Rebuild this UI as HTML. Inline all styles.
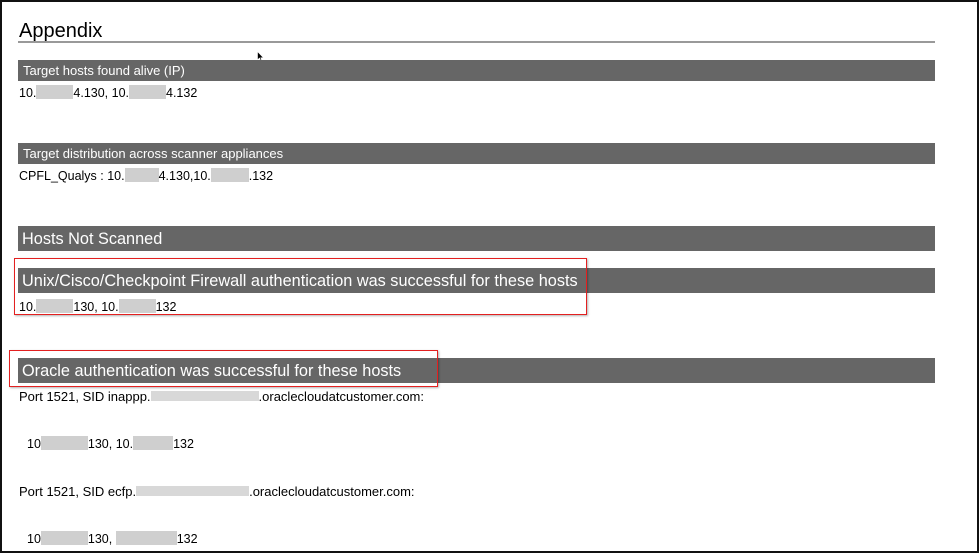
<!DOCTYPE html>
<html><head><style>
html,body{margin:0;padding:0;}
body{width:979px;height:553px;position:relative;overflow:hidden;background:#fff;font-family:"Liberation Sans",Arial,sans-serif;color:#000;}
.frame{position:absolute;left:0;top:0;width:975px;height:549px;border:2px solid #111;box-sizing:content-box;}
.abs{position:absolute;}
.bar{position:absolute;left:18px;width:917px;background:#666;color:#fff;}
.sm{height:21px;font-size:13px;line-height:21px;padding-left:5px;box-sizing:border-box;}
.lg{height:25px;font-size:16.3px;line-height:27px;padding-left:4px;box-sizing:border-box;}
.t{position:absolute;font-size:12.5px;line-height:15px;white-space:nowrap;}
.p{font-size:13px;}
.b{display:inline-block;background:#cfcfcf;height:14px;vertical-align:-2px;}
.bl{display:inline-block;background:#d8d8d8;height:10px;vertical-align:0px;}
.red{position:absolute;border:1.5px solid #e32020;box-shadow:1px 1px 2px rgba(0,0,0,.3);}
</style></head><body>
<div class="frame"></div>
<div class="abs" style="left:19px;top:19px;font-size:20px;line-height:24px;">Appendix</div>
<div class="abs" style="left:18px;top:41px;width:917px;height:2px;background:#999;"></div>
<svg class="abs" style="left:257px;top:51px" width="8" height="12" viewBox="0 0 8 12"><path d="M0.5 0.5 L0.5 9 L2.5 7 L4 10.5 L5 10 L3.8 6.8 L6.5 6.8 Z" fill="#000" stroke="#fff" stroke-width="0.6"/></svg>
<div class="bar sm" style="top:60px;">Target hosts found alive (IP)</div>
<div class="t" style="left:19px;top:85px;">10.<span class="b" style="width:37px"></span>4.130, 10.<span class="b" style="width:37px"></span>4.132</div>
<div class="bar sm" style="top:143px;">Target distribution across scanner appliances</div>
<div class="t" style="left:19px;top:168px;">CPFL_Qualys : 10.<span class="b" style="width:34px"></span>4.130,10.<span class="b" style="width:38px"></span>.132</div>
<div class="bar lg" style="top:226px;">Hosts Not Scanned</div>
<div class="bar lg" style="top:268px;">Unix/Cisco/Checkpoint Firewall authentication was successful for these hosts</div>
<div class="t" style="left:19px;top:299px;">10.<span class="b" style="width:37px"></span>130, 10.<span class="b" style="width:37px"></span>132</div>
<div class="red" style="left:14px;top:258px;width:571px;height:55px;"></div>
<div class="bar lg" style="top:358px;">Oracle authentication was successful for these hosts</div>
<div class="red" style="left:9px;top:350px;width:427px;height:35px;"></div>
<div class="t p" style="left:19px;top:389px;">Port 1521, SID inappp.<span class="bl" style="width:108px"></span>.oraclecloudatcustomer.com:</div>
<div class="t" style="left:27px;top:436px;">10<span class="b" style="width:47px"></span>130, 10.<span class="b" style="width:40px"></span>132</div>
<div class="t p" style="left:19px;top:484px;">Port 1521, SID ecfp.<span class="bl" style="width:113px"></span>.oraclecloudatcustomer.com:</div>
<div class="t" style="left:27px;top:531px;">10<span class="b" style="width:47px"></span>130, <span class="b" style="width:61px"></span>132</div>
</body></html>
